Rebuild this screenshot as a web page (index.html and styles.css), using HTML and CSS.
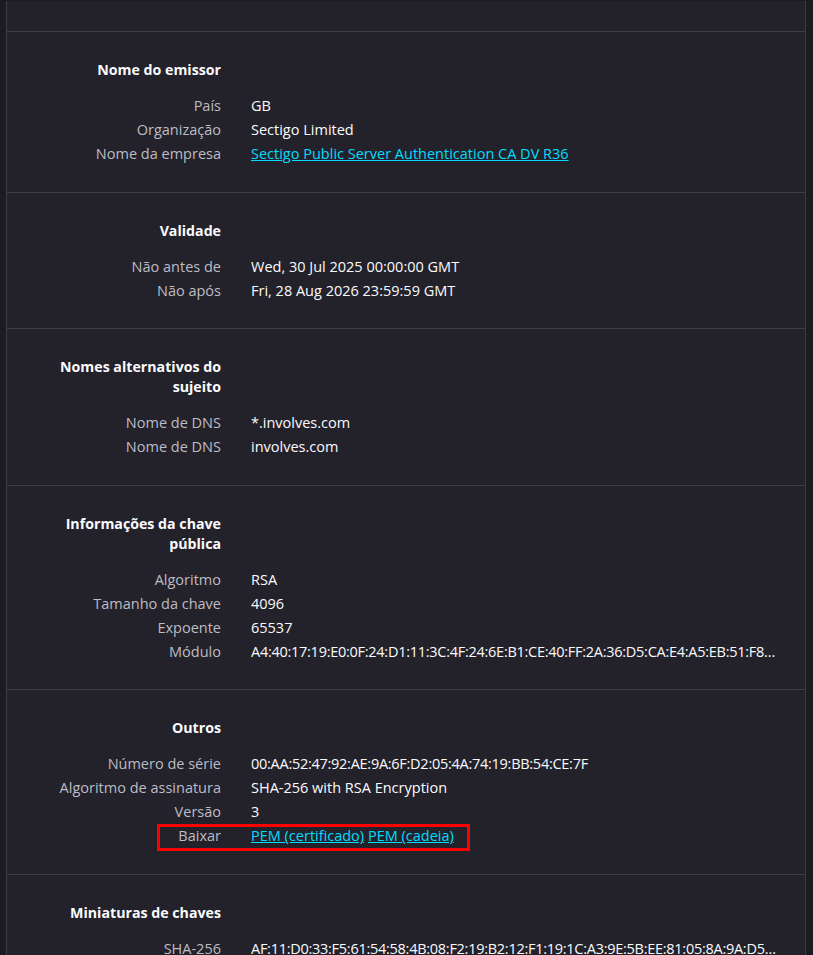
FILE: index.html
```html
<!DOCTYPE html>
<html lang="pt-BR">
<head>
<meta charset="utf-8">
<title>Certificado</title>
<link rel="stylesheet" href="styles.css">
</head>
<body>
<div class="card">
  <section class="sec sec-top"></section>

  <section class="sec">
    <h2 class="title">Nome do emissor</h2>
    <div class="row"><span class="lbl">País</span><span class="val">GB</span></div>
    <div class="row"><span class="lbl">Organização</span><span class="val">Sectigo Limited</span></div>
    <div class="row"><span class="lbl">Nome da empresa</span><span class="val"><a class="link" href="#">Sectigo Public Server Authentication CA DV R36</a></span></div>
  </section>

  <section class="sec">
    <h2 class="title">Validade</h2>
    <div class="row"><span class="lbl">Não antes de</span><span class="val">Wed, 30 Jul 2025 00:00:00 GMT</span></div>
    <div class="row"><span class="lbl">Não após</span><span class="val">Fri, 28 Aug 2026 23:59:59 GMT</span></div>
  </section>

  <section class="sec">
    <h2 class="title">Nomes alternativos do sujeito</h2>
    <div class="row"><span class="lbl">Nome de DNS</span><span class="val">*.involves.com</span></div>
    <div class="row"><span class="lbl">Nome de DNS</span><span class="val">involves.com</span></div>
  </section>

  <section class="sec">
    <h2 class="title">Informações da chave pública</h2>
    <div class="row"><span class="lbl">Algoritmo</span><span class="val">RSA</span></div>
    <div class="row"><span class="lbl">Tamanho da chave</span><span class="val">4096</span></div>
    <div class="row"><span class="lbl">Expoente</span><span class="val">65537</span></div>
    <div class="row"><span class="lbl">Módulo</span><span class="val hex">A4:40:17:19:E0:0F:24:D1:11:3C:4F:24:6E:B1:CE:40:FF:2A:36:D5:CA:E4:A5:EB:51:F8:9C:2B:11:7A:03:5E</span></div>
  </section>

  <section class="sec">
    <h2 class="title">Outros</h2>
    <div class="row"><span class="lbl">Número de série</span><span class="val hex">00:AA:52:47:92:AE:9A:6F:D2:05:4A:74:19:BB:54:CE:7F</span></div>
    <div class="row"><span class="lbl">Algoritmo de assinatura</span><span class="val">SHA-256 with RSA Encryption</span></div>
    <div class="row"><span class="lbl">Versão</span><span class="val">3</span></div>
    <div class="row row-mark"><span class="lbl">Baixar</span><span class="val"><a class="link" href="#">PEM (certificado)</a> <a class="link" href="#">PEM (cadeia)</a></span></div>
  </section>

  <section class="sec">
    <h2 class="title">Miniaturas de chaves</h2>
    <div class="row"><span class="lbl">SHA-256</span><span class="val hex">AF:11:D0:33:F5:61:54:58:4B:08:F2:19:B2:12:F1:19:1C:A3:9E:5B:EE:81:05:8A:9A:D5:3C:77:20:1B:9E:4A</span></div>
  </section>
</div>
</body>
</html>
```

FILE: styles.css
```css
html, body {
  margin: 0;
  padding: 0;
  background: #1c1b22;
  height: 100%;
  overflow: hidden;
}

body {
  font-family: "Open Sans", "Noto Sans", sans-serif;
  font-size: 14.5px;
  color: #fbfbfe;
  padding-top: 1px;
}

.card {
  margin: 0 7px 0 6px;
  background: #23222b;
  border-left: 1px solid #3e3d47;
  border-right: 1px solid #3e3d47;
  min-height: 100%;
}

.sec {
  border-bottom: 1px solid #3e3d47;
  padding: 28px 0 25.5px 0;
}

.sec-top {
  padding: 0;
  height: 30px;
}

.title {
  margin: 0 0 14px 39px;
  width: 175px;
  text-align: right;
  font-size: 14.2px;
  font-weight: 700;
  line-height: 20px;
  color: #fbfbfe;
}

.row {
  display: flex;
  align-items: baseline;
  height: 24px;
  line-height: 24px;
  position: relative;
}

.lbl {
  flex: 0 0 214px;
  text-align: right;
  color: #bdbcc4;
  white-space: nowrap;
}

.val {
  margin-left: 30px;
  margin-right: 28px;
  flex: 1 1 auto;
  min-width: 0;
  white-space: nowrap;
  overflow: hidden;
  text-overflow: ellipsis;
}

.hex {
  letter-spacing: -0.27px;
}

.link {
  color: #00ddff;
  text-decoration: underline;
}

.row-mark::after {
  content: "";
  position: absolute;
  left: 150px;
  top: 0;
  width: 307px;
  height: 21px;
  border: 3px solid #ff0000;
  pointer-events: none;
}
```
